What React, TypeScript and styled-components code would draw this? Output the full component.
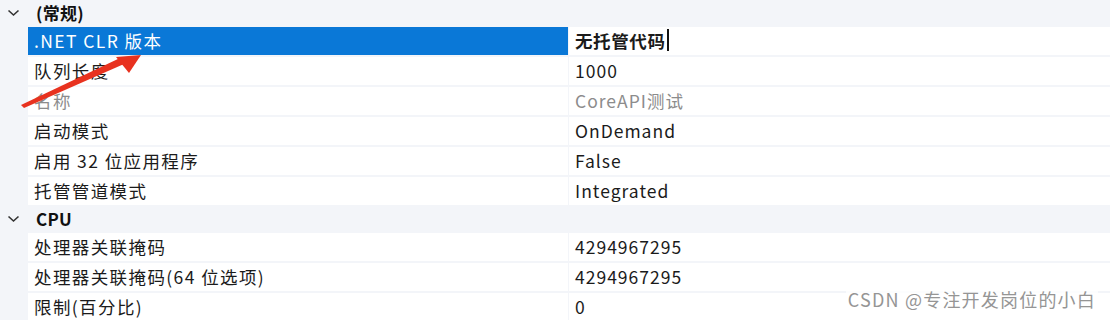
import React from "react";
import styled, { createGlobalStyle } from "styled-components";

type Prop = {
  name: string;
  value: string;
  selected?: boolean;
  disabled?: boolean;
};

type Category = {
  title: string;
  items: Prop[];
};

const categories: Category[] = [
  {
    title: "(常规)",
    items: [
      { name: ".NET CLR 版本", value: "无托管代码", selected: true },
      { name: "队列长度", value: "1000" },
      { name: "名称", value: "CoreAPI测试", disabled: true },
      { name: "启动模式", value: "OnDemand" },
      { name: "启用 32 位应用程序", value: "False" },
      { name: "托管管道模式", value: "Integrated" },
    ],
  },
  {
    title: "CPU",
    items: [
      { name: "处理器关联掩码", value: "4294967295" },
      { name: "处理器关联掩码(64 位选项)", value: "4294967295" },
      { name: "限制(百分比)", value: "0" },
    ],
  },
];

const GlobalStyle = createGlobalStyle`
  html, body {
    margin: 0;
    padding: 0;
    background: #ffffff;
  }
  body {
    font-family: "Noto Sans CJK SC", "Noto Sans", sans-serif;
    overflow: hidden;
  }
`;

const Grid = styled.div`
  position: relative;
  width: 1110px;
  height: 320px;
  background: #f3f5f9;
  overflow: hidden;
`;

const CategoryRow = styled.div`
  display: flex;
  align-items: center;
  height: 26px;
  background: #f3f5f9;
  font-size: 17px;
  font-weight: 700;
  color: #111;
`;

const Chevron = styled.span`
  display: flex;
  align-items: center;
  justify-content: center;
  width: 28px;
  height: 26px;
  padding-right: 2px;
  box-sizing: border-box;
`;

const CategoryTitle = styled.span`
  padding-left: 8px;
  letter-spacing: 0.3px;
  line-height: 24px;
`;

const Row = styled.div`
  display: grid;
  grid-template-columns: 28px 541px 1fr;
  height: 30px;
`;

const Gutter = styled.div`
  background: #f3f5f9;
`;

const NameCell = styled.div<{ $selected?: boolean; $disabled?: boolean }>`
  display: flex;
  align-items: center;
  padding-left: 6px;
  padding-bottom: 2px;
  margin: 1px 1px 1px 0;
  font-size: 17.5px;
  letter-spacing: 1.4px;
  white-space: nowrap;
  background: ${({ $selected }) => ($selected ? "#0a78d7" : "#ffffff")};
  color: ${({ $selected, $disabled }) =>
    $selected ? "#ffffff" : $disabled ? "#8c8c8c" : "#1b1b1b"};
`;

const ValueCell = styled.div<{ $selected?: boolean; $disabled?: boolean }>`
  display: flex;
  align-items: center;
  padding-left: 6px;
  padding-bottom: 2px;
  margin: 1px 0;
  background: #ffffff;
  font-size: 17.5px;
  letter-spacing: ${({ $selected }) => ($selected ? "0.6px" : "1px")};
  white-space: nowrap;
  font-weight: ${({ $selected }) => ($selected ? 700 : 400)};
  color: ${({ $disabled }) => ($disabled ? "#8c8c8c" : "#1b1b1b")};
`;

const Caret = styled.span`
  display: inline-block;
  width: 2px;
  height: 22px;
  margin-left: 1px;
  background: #111;
`;

const Arrow = styled.svg`
  position: absolute;
  left: 0;
  top: 0;
  pointer-events: none;
`;

const Watermark = styled.div`
  position: absolute;
  right: 12px;
  bottom: 8px;
  font-family: "Noto Sans CJK SC", sans-serif;
  font-size: 18px;
  letter-spacing: 1.2px;
  color: #959595;
  background: rgba(255, 255, 255, 0.75);
  padding: 0 2px;
`;

const ChevronIcon = () => (
  <svg width="13" height="8" viewBox="0 0 13 8">
    <polyline
      points="1.5,1.5 6.5,6 11.5,1.5"
      fill="none"
      stroke="#333"
      strokeWidth="1.6"
    />
  </svg>
);

export default function App() {
  return (
    <>
      <GlobalStyle />
      <Grid>
        {categories.map((cat) => (
          <React.Fragment key={cat.title}>
            <CategoryRow>
              <Chevron>
                <ChevronIcon />
              </Chevron>
              <CategoryTitle>{cat.title}</CategoryTitle>
            </CategoryRow>
            {cat.items.map((p) => (
              <Row key={p.name}>
                <Gutter />
                <NameCell $selected={p.selected} $disabled={p.disabled}>
                  {p.name}
                </NameCell>
                <ValueCell $selected={p.selected} $disabled={p.disabled}>
                  {p.value}
                  {p.selected && <Caret />}
                </ValueCell>
              </Row>
            ))}
          </React.Fragment>
        ))}
        <Arrow width="160" height="120" viewBox="0 0 160 120">
          <polygon points="21,105 24,108 124,64 120,58" fill="#e8321f" />
          <polygon points="141,55 116,57 129,73" fill="#e8321f" />
        </Arrow>
        <Watermark>CSDN @专注开发岗位的小白</Watermark>
      </Grid>
    </>
  );
}
